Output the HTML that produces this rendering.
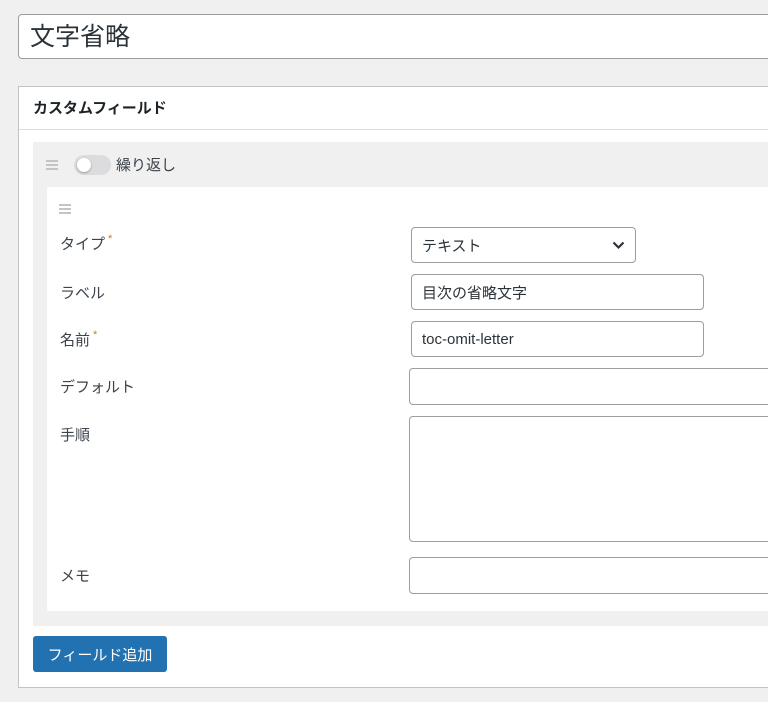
<!DOCTYPE html>
<html><head><meta charset="utf-8"><style>
body{margin:0;width:768px;height:702px;background:#f0f0f1;font-family:"Liberation Sans","Noto Sans CJK JP",sans-serif;color:#3c434a;position:relative;overflow:hidden}
.a{position:absolute;box-sizing:border-box}
.inp{border:1px solid #9a9da1;border-radius:4px;background:#fff;font-size:15px;color:#2c3338;padding-left:10px;display:flex;align-items:center}
.lbl{position:absolute;left:60px;font-size:15px;color:#3c434a}
.req{color:#b7862a;font-size:11px;vertical-align:top;margin-left:3px}
.drag{position:absolute;width:12px;height:2px;background:#c3c4c7;box-shadow:0 4px 0 #c3c4c7,0 8px 0 #c3c4c7}
</style></head><body>
<div class="a inp" style="left:18px;top:14px;width:760px;height:45px;font-size:25px;color:#2c3338;padding-left:11px;padding-bottom:3px">文字省略</div>
<div class="a" style="left:18px;top:86px;width:760px;height:602px;background:#fff;border:1px solid #c3c4c7"></div>
<div class="a" style="left:19px;top:87px;width:760px;height:43px;border-bottom:1px solid #dcdcde;font-size:15px;font-weight:bold;color:#1d2327;padding:10px 0 0 14px">カスタムフィールド</div>
<div class="a" style="left:33px;top:142px;width:740px;height:484px;background:#f0f0f1"></div>
<div class="drag" style="left:46px;top:160px"></div>
<div class="a" style="left:74px;top:155px;width:37px;height:20px;border-radius:10px;background:#dcdcde"></div>
<div class="a" style="left:77px;top:158px;width:14px;height:14px;border-radius:7px;background:#fff;box-shadow:0 1px 2px rgba(0,0,0,.3)"></div>
<div class="a" style="left:116px;top:154px;font-size:15px">繰り返し</div>
<div class="a" style="left:47px;top:187px;width:730px;height:424px;background:#fff"></div>
<div class="drag" style="left:59px;top:204px"></div>
<div class="lbl" style="top:233px">タイプ<span class="req">*</span></div>
<div class="a inp" style="left:411px;top:227px;width:225px;height:36px">テキスト
<svg style="position:absolute;right:10px;top:13px" width="13" height="9" viewBox="0 0 13 9"><path d="M1.5 1.5l5 5 5-5" stroke="#2c3338" stroke-width="2.2" fill="none"/></svg></div>
<div class="lbl" style="top:282px">ラベル</div>
<div class="a inp" style="left:411px;top:274px;width:293px;height:36px">目次の省略文字</div>
<div class="lbl" style="top:329px">名前<span class="req">*</span></div>
<div class="a inp" style="left:411px;top:321px;width:293px;height:36px">toc-omit-letter</div>
<div class="lbl" style="top:376px">デフォルト</div>
<div class="a inp" style="left:409px;top:368px;width:370px;height:37px"></div>
<div class="lbl" style="top:424px">手順</div>
<div class="a inp" style="left:409px;top:416px;width:370px;height:126px"></div>
<div class="lbl" style="top:565px">メモ</div>
<div class="a inp" style="left:409px;top:557px;width:370px;height:37px"></div>
<div class="a" style="left:33px;top:636px;width:134px;height:36px;background:#2271b1;border-radius:3px;color:#fff;font-size:15px;display:flex;align-items:center;justify-content:center">フィールド追加</div>
</body></html>
